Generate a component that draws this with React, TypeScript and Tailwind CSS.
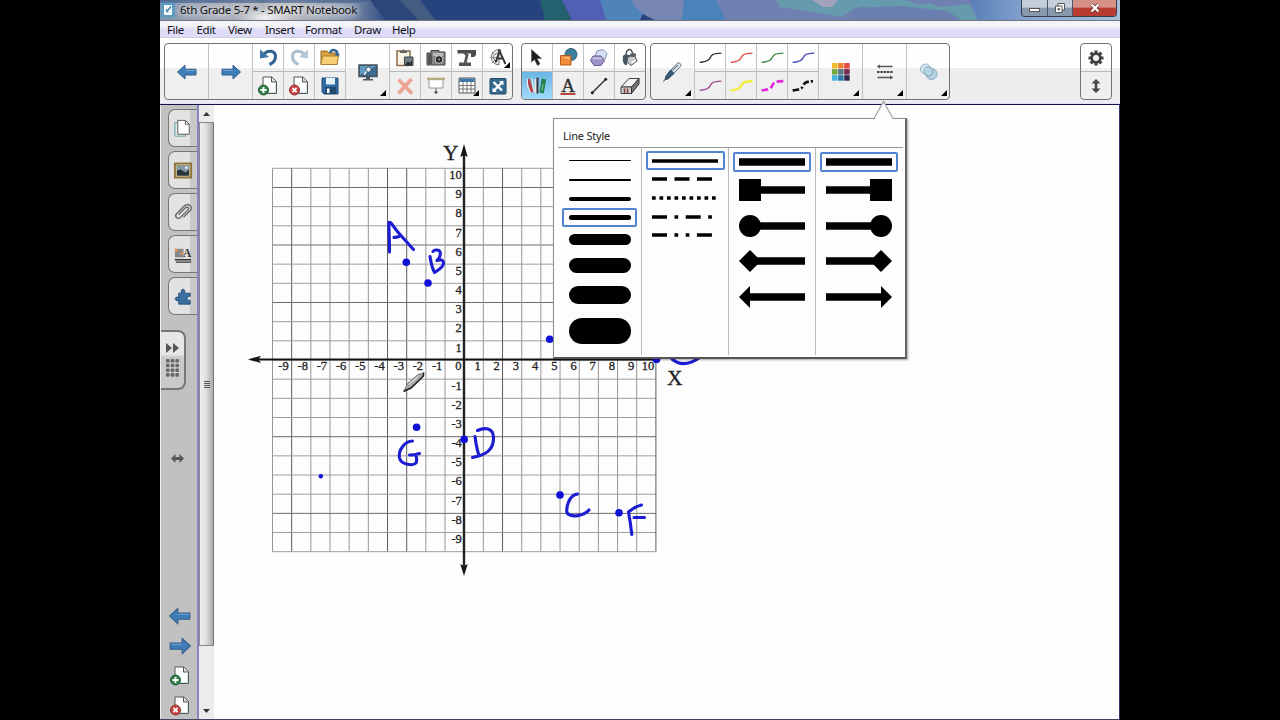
import type { ReactNode } from 'react';
import clsx from 'clsx';

const menus = [
  { label: 'File', width: 'w-[29.5px]' },
  { label: 'Edit', width: 'w-[31.5px]' },
  { label: 'View', width: 'w-[37px]' },
  { label: 'Insert', width: 'w-[40px]' },
  { label: 'Format', width: 'w-[49px]' },
  { label: 'Draw', width: 'w-[38px]' },
  { label: 'Help', width: 'w-[40px]' },
];

function Icon({ children, size = 22 }: { children: ReactNode; size?: number }) {
  return (
    <svg width={size} height={size} viewBox="0 0 22 22" fill="none" className="shrink-0">
      {children}
    </svg>
  );
}

/* ---------- icons ---------- */

function ArrowIcon({ right = false, size = 22 }: { right?: boolean; size?: number }) {
  return (
    <Icon size={size}>
      <path
        transform={right ? 'translate(22 0) scale(-1 1)' : undefined}
        d="M1.5 11 9 4.2V8.2H20V14H9V18Z"
        fill="#3f7db8"
        stroke="#345f8c"
        strokeWidth="1"
      />
      <path d={right ? 'M3 9.500H13' : 'M9 9.500H19'} stroke="#6ba2d2" />
    </Icon>
  );
}

function UndoIcon({ redo = false }: { redo?: boolean }) {
  return (
    <Icon>
      <g transform={redo ? 'translate(22 -1) scale(-1 1)' : 'translate(1 -1)'}>
        <path d="M6 8C10 3.500 17 4.500 17.500 10C17.700 14 15 17 11.500 18.500" stroke={redo ? '#a9bfd0' : '#2f628f'} strokeWidth="3" />
        <path d="M2 3.500V12.500L11 11Z" fill={redo ? '#b3c7d6' : '#3d76a6'} />
      </g>
    </Icon>
  );
}

function PageIcon({ remove = false }: { remove?: boolean }) {
  return (
    <Icon>
      <path d="M6 2H15L19.500 6.500V18.500H6Z" fill="#fdfefe" stroke="#555" />
      <path d="M8 17.500H18.500V9" stroke="#c8e6e6" />
      <path d="M14.500 2V7H19.500" fill="#ddd" stroke="#555" />
      <circle cx="6.500" cy="15" r="5" fill={remove ? '#c9403f' : '#31804a'} stroke={remove ? '#8e2f2f' : '#235d36'} />
      {remove ? (
        <path d="M4.400 12.900 8.600 17.100M8.600 12.900 4.400 17.100" stroke="#fff" strokeWidth="1.800" />
      ) : (
        <path d="M6.500 12V18M3.500 15H9.500" stroke="#fff" strokeWidth="1.800" />
      )}
    </Icon>
  );
}

const FolderIcon = () => (
  <Icon>
    <path d="M2 4H8L10 6H18V17.500H2Z" fill="#d8a33d" stroke="#8f6b28" />
    <path d="M11 6C12 2 18 1.500 18.500 7" stroke="#35699a" strokeWidth="2.500" />
    <path d="M15.500 7H21L18.500 11Z" fill="#35699a" />
    <path d="M2 17.500 3.500 9H19.500L18 17.500Z" fill="#f5cf72" stroke="#a57d33" />
  </Icon>
);

const SaveIcon = () => (
  <Icon>
    <path d="M3 3H19V19H5L3 17Z" fill="#2f6ca3" stroke="#244d78" />
    <path d="M7 3H16V9.500H7Z" fill="#e6f0f8" />
    <path d="M6 12H17V19H6Z" fill="#234a70" />
    <path d="M8 13.500H10.500V18H8Z" fill="#fff" />
  </Icon>
);

const MonitorIcon = () => (
  <Icon>
    <path d="M2 4H20V15.500H2Z" fill="#3c6c8d" stroke="#47525c" strokeWidth="1.500" />
    <path d="M3 5H19L3 14Z" fill="#5f9cc0" />
    <circle cx="11.500" cy="8.500" r="2.700" fill="#e5f1f7" stroke="#28465d" />
    <path d="M9.500 10.500 7 13.500" stroke="#fff" strokeWidth="1.500" />
    <path d="M9 16H13V18H16V19.500H6V18H9Z" fill="#4d5962" />
  </Icon>
);

const PasteIcon = () => (
  <Icon>
    <path d="M3 4H16V18.500H3Z" fill="#f8f1e5" stroke="#8b6a49" strokeWidth="1.500" />
    <path d="M6 6V3.500H8.500L9.500 2L10.500 3.500H13V6Z" fill="#666" />
    <path d="M10.500 10H19V18.500H10.500Z" fill="#6f7f88" stroke="#444" />
    <path d="M11 18 14 14 16 16 18 13V18Z" fill="#2b3338" />
  </Icon>
);

const CameraIcon = () => (
  <Icon>
    <path d="M2 6H6V3.500H14V5H20V18H2Z" fill="#858585" stroke="#444" />
    <path d="M3 7H7V17H3Z" fill="#555" />
    <path d="M8 6H18V9H8Z" fill="#bbb" />
    <circle cx="14" cy="12.500" r="3.800" fill="#222" stroke="#ccc" />
    <circle cx="14" cy="12.500" r="1.300" fill="#888" />
  </Icon>
);

const DocCameraIcon = () => (
  <Icon>
    <path d="M1.500 3H20V8L18 10H15V6.500H1.500Z" fill="#4b4b4b" />
    <path d="M8 5 11 8 9 17" stroke="#555" strokeWidth="2.800" />
    <path d="M3 15.500H15V19H3Z" fill="#555" />
  </Icon>
);

const CompassIcon = () => (
  <Icon>
    <path d="M12 2.500A7.700 7.700 0 1 0 12 17.900Z" fill="#e9edef" stroke="#777" />
    <path d="M11 6.500A3.800 3.800 0 1 0 11 14" fill="#fff" stroke="#777" />
    <path d="M3 10.500H10M5 5 8 8M5 16 8 13" stroke="#8c8c8c" />
    <path d="M8.500 15.500 12.500 4 18.500 17M10 11.500H16" stroke="#333" strokeWidth="1.900" />
    <circle cx="12.500" cy="4" r="1.700" fill="#444" />
  </Icon>
);

const DeleteIcon = () => (
  <Icon>
    <path d="M4.500 4.500 18 18.500M17.500 4 4.500 18.500" stroke="#eda596" strokeWidth="3.800" />
  </Icon>
);

const ShadeIcon = () => (
  <Icon>
    <path d="M2 4H20" stroke="#b3ab7e" strokeWidth="2.500" />
    <path d="M4 5.500V13H18V5.500" fill="#fff" stroke="#999" />
    <path d="M11 13V16" stroke="#777" />
    <circle cx="11" cy="17.300" r="1.500" fill="#555" />
  </Icon>
);

const TableIcon = () => (
  <Icon>
    <path d="M3 3H19V18H3Z" fill="#fff" stroke="#555" />
    <path d="M3.500 3.500H18.500V7H3.500Z" fill="#3f76a7" />
    <path d="M3 10.500H19M3 14H19M7 7V18M11 7V18M15 7V18" stroke="#777" />
  </Icon>
);

const ExchangeIcon = () => (
  <Icon>
    <rect x="3" y="3.500" width="16" height="15.500" rx="1" fill="#33688f" stroke="#234966" />
    <path d="M6.500 7 15 15.500M15 7.500 7 15.500" stroke="#fff" strokeWidth="2.400" />
    <path d="M12 6H16.500V10.500ZM5.500 12.500V17H10Z" fill="#fff" />
  </Icon>
);

const PointerIcon = () => (
  <Icon>
    <path d="M5.500 2.500V15L8.500 12.500 11.500 18.500 14 17 11 11.500H15.500Z" fill="#1c1c1c" stroke="#555" strokeWidth="0.600" />
  </Icon>
);

const ShapesIcon = () => (
  <Icon>
    <circle cx="14" cy="7.500" r="6" fill="#3d7f9e" stroke="#2e6079" />
    <path d="M3.500 8.500H14V18H3.500Z" fill="#f18b38" stroke="#b35b1f" />
    <path d="M5 10H12.500V12.500Z" fill="#fac183" />
  </Icon>
);

const PolygonIcon = () => (
  <Icon>
    <path d="M9 4 15 2.500 19 6.500 17 12 11 13.500 7 9.500Z" fill="#d6def4" stroke="#8290b5" />
    <path d="M5 9H13L16.500 13.500 13 18.500H6L2.500 13.500Z" fill="#9b91c5" stroke="#665b91" />
    <path d="M5 10H13L14.500 12.500H4Z" fill="#c4bddf" />
  </Icon>
);

const BucketIcon = () => (
  <Icon>
    <path d="M9 9 15 7 18 14 12 18.500 8 15Z" fill="#c5cacc" stroke="#555" />
    <path d="M7 9C7 1 13 0 14 8" stroke="#555" strokeWidth="1.500" />
    <path d="M4 9C6 6 10 8 13 9L8 11V18C5 19 3 14 4 9Z" fill="#435763" />
    <ellipse cx="14" cy="8" rx="3.200" ry="2" fill="#5c6469" />
    <path d="M12.500 16 16.500 13.500" stroke="#fff" strokeWidth="1.500" />
  </Icon>
);

const PensIcon = () => (
  <Icon>
    <path d="M2.500 4 6 17.500" stroke="#b63f45" strokeWidth="3" />
    <path d="M1.500 4V11L5 18M5.500 3 8 17" stroke="#eee" />
    <path d="M9.500 4V18" stroke="#e6e6e6" strokeWidth="2" />
    <path d="M11.500 2.500V18.500" stroke="#393939" strokeWidth="2" />
    <path d="M18 4 15.500 18" stroke="#21814f" strokeWidth="4.500" />
    <path d="M17 9 16 16" stroke="#84c49f" />
  </Icon>
);

const TextIcon = () => (
  <Icon>
    <text x="11" y="16.500" textAnchor="middle" fontSize="19" fontFamily="Liberation Serif, serif" fill="#333" stroke="#333" strokeWidth="0.400">
      A
    </text>
    <path d="M3.500 19H18.500" stroke="#b5473f" strokeWidth="2.200" />
  </Icon>
);

const LineIcon = () => (
  <Icon>
    <path d="M4 18 18 4" stroke="#333" strokeWidth="1.400" />
    <circle cx="4.300" cy="17.700" r="1.500" fill="#222" />
    <circle cx="17.700" cy="4.300" r="1.500" fill="#222" />
  </Icon>
);

const EraserIcon = () => (
  <Icon>
    <path d="M2 12 10 3.500H20L12.500 12Z" fill="#f2f2f2" stroke="#444" />
    <path d="M2 12H12.500V18.500H2Z" fill="#d0cbc8" stroke="#444" />
    <path d="M12.500 12 20 3.500V9L12.500 18.500Z" fill="#777" stroke="#333" />
    <path d="M5.500 13.500V18M8.500 13.500V18" stroke="#7a4038" strokeWidth="1.500" />
  </Icon>
);

const PenIcon = () => (
  <Icon>
    <path d="M9 9 15 2.500C17 .8 20 3 18.500 5.500L11 13Z" fill="#e1e8ee" stroke="#5d6b78" />
    <path d="M8.500 9 12 12.500 6 18 3 18.500 4 15Z" fill="#3b5d7d" stroke="#32485c" />
    <path d="M3 18.500 1.500 20.500" stroke="#333" />
    <path d="M10.500 9.500 16 4" stroke="#7b8e9e" strokeWidth="1.500" />
  </Icon>
);

const swatches = ['#f2b92c', '#f0822f', '#e34b43', '#76a944', '#58778b', '#7b2850', '#45b4df', '#3079ab', '#332750'];

const PaletteIcon = () => (
  <Icon>
    {swatches.map((c, i) => (
      <rect key={c} x={2 + (i % 3) * 6.1} y={2 + Math.floor(i / 3) * 6.1} width="5.500" height="5.500" fill={c} />
    ))}
  </Icon>
);

const LineStyleIcon = () => (
  <Icon>
    <path d="M3.500 5.500H18.500" stroke="#555" strokeWidth="1.700" />
    <path d="M3 5.500 6 3.500V7.500ZM19 16.500 16 14.500V18.500Z" fill="#555" />
    <path d="M3 11H19" stroke="#444" strokeWidth="2" strokeDasharray="2.500 .8" />
    <path d="M3.500 16.500H18.500" stroke="#555" strokeWidth="1.700" />
  </Icon>
);

const TransparencyIcon = () => (
  <Icon>
    <circle cx="7.500" cy="8" r="5" fill="#d1e5ee" stroke="#9ab5c4" />
    <circle cx="13.500" cy="13" r="5.500" fill="#a8cde0" fillOpacity=".8" stroke="#88aabd" />
    <circle cx="10.500" cy="10.500" r="4.500" fill="#bcdbe8" fillOpacity=".6" stroke="#819dad" />
  </Icon>
);

const GearIcon = () => (
  <Icon>
    {[0, 45, 90, 135].map((a) => (
      <path key={a} d="M11 3.500V18.500" stroke="#414141" strokeWidth="3.200" transform={`rotate(${a} 11 11)`} />
    ))}
    <circle cx="11" cy="11" r="5.600" fill="#414141" />
    <circle cx="11" cy="11" r="3" fill="#f7f7f7" />
  </Icon>
);

const UpDownIcon = () => (
  <Icon>
    <path d="M11 4 15.500 8.500H12.300V13.500H15.500L11 18 6.500 13.500H9.700V8.500H6.500Z" fill="#464646" />
  </Icon>
);

function Stroke({ color, dash, bold }: { color: string; dash?: string; bold?: boolean }) {
  return (
    <Icon size={24}>
      <path d="M1.500 15C5.500 14.500 9.500 14.500 11 11S13.500 7 21.500 6.500" stroke={color} strokeWidth={bold ? 2.4 : 1.3} strokeDasharray={dash} />
    </Icon>
  );
}

/* ---------- toolbar ---------- */

function Group({ className, children }: { className: string; children: ReactNode }) {
  return (
    <div
      className={clsx(
        'flex h-[57px] shrink-0 overflow-hidden rounded-[4px] border border-[#737373] bg-linear-to-b from-[#fefefe] from-44% to-[#efefef] to-44%',
        className,
      )}
    >
      {children}
    </div>
  );
}

const Corner = () => (
  <span className="absolute right-[3px] bottom-[3px] h-[6px] w-[6px] bg-black [clip-path:polygon(100%_0,100%_100%,0_100%)]" />
);

function Big({ children, corner }: { children: ReactNode; corner?: boolean }) {
  return (
    <div className="relative flex w-[44px] shrink-0 items-center justify-center border-r border-[#c2c2c2] first:w-[44px] last:w-[43px] last:border-r-0">
      {children}
      {corner && <Corner />}
    </div>
  );
}

function Pair({ top, bottom, corners = '', active }: { top: ReactNode; bottom: ReactNode; corners?: string; active?: boolean }) {
  return (
    <div className="flex w-[31px] shrink-0 flex-col border-r border-[#c2c2c2] last:w-[30px] last:border-r-0">
      <div className="relative flex h-[28px] items-center justify-center border-b border-[#b8b8b8]">
        {top}
        {corners.includes('t') && <Corner />}
      </div>
      <div className={clsx('relative flex flex-1 items-center justify-center', active && 'bg-linear-to-b from-[#68b5e4] to-[#a1d9fa]')}>
        {bottom}
        {corners.includes('b') && <Corner />}
      </div>
    </div>
  );
}

function Toolbar() {
  return (
    <div className="flex h-[66px] items-start border-b border-[#e0e0f4] bg-linear-to-b from-white from-46% to-[#eeeeef] to-46% pt-[5px] pr-[8px] pl-[4px]">
      <Group className="w-[349px]">
        <Big><ArrowIcon /></Big>
        <Big><ArrowIcon right /></Big>
        <Pair top={<UndoIcon />} bottom={<PageIcon />} />
        <Pair top={<UndoIcon redo />} bottom={<PageIcon remove />} />
        <Pair top={<FolderIcon />} bottom={<SaveIcon />} />
        <Big corner><MonitorIcon /></Big>
        <Pair top={<PasteIcon />} bottom={<DeleteIcon />} />
        <Pair top={<CameraIcon />} bottom={<ShadeIcon />} />
        <Pair top={<DocCameraIcon />} bottom={<TableIcon />} corners="b" />
        <Pair top={<CompassIcon />} bottom={<ExchangeIcon />} corners="t" />
      </Group>
      <Group className="ml-[8px] w-[125px]">
        <Pair top={<PointerIcon />} bottom={<PensIcon />} active />
        <Pair top={<ShapesIcon />} bottom={<TextIcon />} />
        <Pair top={<PolygonIcon />} bottom={<LineIcon />} />
        <Pair top={<BucketIcon />} bottom={<EraserIcon />} />
      </Group>
      <Group className="ml-[4px] w-[300px]">
        <Big corner><PenIcon /></Big>
        <Pair top={<Stroke color="#333" />} bottom={<Stroke color="#a04c90" />} />
        <Pair top={<Stroke color="#dd4f4c" />} bottom={<Stroke color="#f0ef4a" bold />} />
        <Pair top={<Stroke color="#448849" />} bottom={<Stroke color="#e324dc" bold dash="6 2.500" />} />
        <Pair top={<Stroke color="#4448bd" />} bottom={<Stroke color="#111" bold dash="6 2 2 2" />} />
        <Big corner><PaletteIcon /></Big>
        <Big corner><LineStyleIcon /></Big>
        <Big corner><TransparencyIcon /></Big>
      </Group>
      <Group className="ml-auto w-[32px]">
        <Pair top={<GearIcon />} bottom={<UpDownIcon />} />
      </Group>
    </div>
  );
}

/* ---------- window chrome ---------- */

function TitleBar() {
  return (
    <div className="relative flex h-[21px] items-center overflow-hidden border-b border-[#6f7888] bg-[#27437d]">
      <svg className="absolute inset-0" width="960" height="20" viewBox="160 0 960 20">
        <defs>
          <linearGradient id="glass" x1="0" x2="1">
            <stop offset="0" stopColor="#8393ab" />
            <stop offset=".18" stopColor="#a0a6b4" />
            <stop offset=".5" stopColor="#b8b9bd" />
            <stop offset=".7" stopColor="#8e9bb0" />
            <stop offset=".85" stopColor="#3c5688" />
            <stop offset="1" stopColor="#27437d" />
          </linearGradient>
          <radialGradient id="glow">
            <stop offset="0" stopColor="#fff" stopOpacity=".85" />
            <stop offset="1" stopColor="#fff" stopOpacity="0" />
          </radialGradient>
          <linearGradient id="sky" x1="0" x2="1">
            <stop offset="0" stopColor="#5a7fb8" />
            <stop offset=".4" stopColor="#86a5cf" />
            <stop offset="1" stopColor="#a9bed6" />
          </linearGradient>
        </defs>
        <path d="M160 0H420V20H160Z" fill="url(#glass)" />
        <path d="M160 0H375L355 3H160Z" fill="#405d8c" opacity=".7" />
        <ellipse cx="265" cy="18" rx="28" ry="10" fill="url(#glow)" />
        <path d="M370 0H400L425 20H385Z" fill="#2b4679" />
        <path d="M400 0H420L435 20H418Z" fill="#435c80" />
        <path d="M540 0H562L572 20H545Z" fill="#24616f" />
        <path d="M562 0H600L610 20H572Z" fill="#515fb5" />
        <path d="M600 0H650L640 20H606Z" fill="#4f84b8" />
        <path d="M632 0H690L682 20H655Q635 12 632 0Z" fill="#7886b4" />
        <path d="M684 0H720L728 20H682Z" fill="#4a83b9" />
        <path d="M716 0H985L990 20H726Z" fill="#7180b2" />
        <path d="M776 0H905L920 5 930 3 940 7 970 4 978 20H850L865 6 852 10 842 17 800 10 780 7Z" fill="#659bad" />
        <path d="M812 0H838L832 7H823Z" fill="#a3a2bd" />
        <path d="M855 8 900 6 948 11 960 20H848Z" fill="#6b7eb0" />
        <path d="M970 0H1120V20H978Z" fill="url(#sky)" />
      </svg>
      <svg className="relative ml-px" width="15" height="16" viewBox="0 0 15 16">
        <rect width="14" height="15" y=".5" rx="1" fill="#5c9cc3" />
        <path d="M3 3H11V13H3Z" fill="#f3f9fb" />
        <path d="M5.500 10 10 4.500M5 7 7 10" stroke="#35799b" strokeWidth="1.200" fill="none" />
      </svg>
      <span className="relative ml-[4px] text-[11.5px] tracking-[-0.3px] whitespace-nowrap text-[#111] [text-shadow:0_0_6px_#fff,0_0_8px_#fff]">
        6th Grade 5-7 * - SMART Notebook
      </span>
      <div className="relative mr-[3px] ml-auto flex h-[17px] self-start overflow-hidden rounded-b-[4px] border border-t-0 border-[#353d4b]">
        <div className="flex w-[26px] items-center justify-center border-r border-[#4c5669] bg-linear-to-b from-[#c5cfdb] from-45% to-[#8899ae] to-50%">
          <span className="mt-[3px] h-[4px] w-[11px] border border-[#555] bg-white" />
        </div>
        <div className="flex w-[25px] items-center justify-center border-r border-[#4c5669] bg-linear-to-b from-[#c5cfdb] from-45% to-[#8899ae] to-50%">
          <svg width="12" height="12" viewBox="0 0 12 12" fill="none">
            <path d="M4 1.500H10.500V8H4Z" fill="#fff" stroke="#555" />
            <path d="M1.500 4H8V10.500H1.500Z" fill="#fff" stroke="#555" />
            <path d="M4 6.500H5.500V8H4Z" stroke="#555" />
          </svg>
        </div>
        <div className="flex w-[43px] items-center justify-center bg-linear-to-b from-[#d59087] from-45% to-[#b93c31] to-50%">
          <svg width="12" height="10" viewBox="0 0 12 10">
            <path d="M2.500 1.500 9.500 8.500M9.500 1.500 2.500 8.500" stroke="#633" strokeWidth="3.600" />
            <path d="M2.500 1.500 9.500 8.500M9.500 1.500 2.500 8.500" stroke="#fff" strokeWidth="2.200" />
          </svg>
        </div>
      </div>
    </div>
  );
}

const tabIcons = [
  <Icon key="pages" size={21}>
    <path d="M2 5H13V19H2Z" fill="#e4f1f1" stroke="#5c9a9a" />
    <path d="M5 2.500H13L17 6.500V17H5Z" fill="#fff" stroke="#555" />
    <path d="M13 2.500V6.500H17" stroke="#555" />
  </Icon>,
  <Icon key="gallery" size={21}>
    <path d="M2 3.500H19V18.500H2Z" fill="#27343c" stroke="#96753b" strokeWidth="2" />
    <path d="M4 5.500H17V10L13 13 8 10 4 11Z" fill="#84999f" />
    <circle cx="14" cy="8" r="1.500" fill="#eef" />
    <path d="M3.500 5V17H17.500V5Z" stroke="#e5d7a4" />
  </Icon>,
  <Icon key="clip" size={21}>
    <path d="M6 13 13 6C15 4 17.500 6.500 15.500 8.500L8 16C4.500 19 1 15 4 12L12 4C16 .5 21.500 5 18 9L11 16" stroke="#666" strokeWidth="1.400" />
  </Icon>,
  <Icon key="props" size={21}>
    <path d="M2 5H11V14H2Z" fill="#888" />
    <path d="M2 5H5V8H2ZM8 8H11V11H8Z" fill="#d6955f" />
    <text x="10.500" y="14" fontSize="12" fontWeight="bold" fontFamily="Liberation Serif, serif" fill="#333">A</text>
    <path d="M2 16.500H19M3 19H19" stroke="#333" strokeWidth="1.500" />
  </Icon>,
  <Icon key="addons" size={21}>
    <path d="M6 7.500H9C7 2 14 2 12 7.500H18V11C14 10 14 16 18 15V19H6V15C1 17 1 10 6 12Z" fill="#3c6f9e" stroke="#2b527a" />
  </Icon>,
];

function Sidebar() {
  return (
    <div className="flex w-[37px] shrink-0 flex-col border-l border-[#ededed] bg-[#c1c1c1]">
      <div className="flex flex-col gap-[4px] pt-[4px] pl-[7px]">
        {tabIcons.map((icon) => (
          <div key={icon.key} className="flex h-[38px] items-center rounded-l-[7px] border border-r-0 border-[#777] bg-linear-to-r from-[#e2e2e2] from-75% to-[#c9c9c9] to-75% pl-[4px]">
            {icon}
          </div>
        ))}
      </div>
      <div className="mt-[15px] flex h-[60px] w-[25px] flex-col items-center rounded-r-[8px] border-2 border-l-0 border-[#777] bg-linear-to-b from-[#e6e6e6] from-40% to-[#c9c9c9] to-45% pt-[10px]">
        <svg width="16" height="40" viewBox="0 0 16 40">
          <path d="M1 1 7 6 1 11ZM8 1 14 6 8 11Z" fill="#555" />
          {[0, 1, 2, 3].flatMap((r) =>
            [0, 1, 2].map((c) => <rect key={`${r}${c}`} x={1 + c * 4.7} y={17 + r * 4.7} width="3.600" height="3.600" rx="1.200" fill="#666" />),
          )}
        </svg>
      </div>
      <svg className="mt-[61px] ml-[9px]" width="15" height="15" viewBox="0 0 15 15">
        <path d="M1 7.500 5.500 3V6H9.500V3L14 7.500 9.500 12V9H5.500V12Z" fill="#585858" />
      </svg>
      <div className="mt-auto mb-[2px] flex flex-col items-center gap-[8px] pl-px">
        <ArrowIcon size={24} />
        <div className="-mt-[2px]"><ArrowIcon right size={24} /></div>
        <div className="-mt-px"><PageIcon /></div>
        <PageIcon remove />
      </div>
    </div>
  );
}

function ScrollBar() {
  return (
    <div className="flex w-[17px] shrink-0 flex-col items-center border-l-2 border-[#8885bd] bg-[#ececec]">
      <span className="mt-[7px] h-[4px] w-[7px] bg-[#333] [clip-path:polygon(50%_0,100%_100%,0_100%)]" />
      <div className="mt-[6px] flex h-[524px] w-full items-center justify-center rounded-[1px] border border-[#8a8a8a] border-r-[#777] bg-linear-to-r from-[#efefef] via-[#e2e2e2] via-45% to-[#aaaaaa]">
        <span className="flex flex-col gap-px">
          <span className="h-px w-[6px] bg-[#555]" />
          <span className="h-px w-[6px] bg-[#555]" />
          <span className="h-px w-[6px] bg-[#555]" />
          <span className="h-px w-[6px] bg-[#555]" />
        </span>
      </div>
      <span className="mt-auto mb-[6px] h-[4px] w-[7px] bg-[#333] [clip-path:polygon(0_0,100%_0,50%_100%)]" />
    </div>
  );
}

/* ---------- worksheet ---------- */

const X0 = 272.5;
const Y0 = 168.3;
const STEP = 19.17;
const darkCols = [1, 6, 7, 12, 20];
const darkRows = [1, 4, 7, 14, 18];

const points = [
  [406.3, 262.3],
  [428, 283],
  [549.7, 339.2],
  [416.6, 427.3],
  [464.2, 439.4],
  [560, 495],
  [619, 512.7],
  [656.5, 359.5],
];

const ink = [
  'M389.500 252C389.500 241 389 230 388.800 222.500C391 221 393 227 400 234.500L413.500 249.500M394 237.500C396 236.500 398.500 238 400.500 235.500',
  'M430 256.500C431 263 432 268 434.500 272.500C438 270 444 267 443.500 262.500C443 259 439 260 437 260.500C441 257 441 252 439 250.500C437 249.500 434 250 433 251.500',
  'M412.500 441C405 441 398 450 399.500 458C401 465 413 466 416 463C417.500 460 416 455 415.500 454.500C413 455 411 455 409.500 455M415.500 454.500L419.500 453.500',
  'M475 436.500C476 444 477 450 479 455.500M477.500 430.500C485 427 493 428 493.500 437C494 450 486 455 472.500 457.500',
  'M577.500 494C569 495 566 507 567 513C571 518 584 516 589 510',
  'M641.500 505C637 506 632 509 628.500 512C630 520 631 527 631.800 534.500M634 517.500H644.500',
  'M672 359C680 366 690 364 699 358',
];

function Worksheet() {
  return (
    <svg width="905" height="614" viewBox="214 105 905 614" fill="none" className="block">
      {Array.from({ length: 21 }, (_, i) => (
        <g key={i}>
          <path d={`M${X0 + i * STEP} ${Y0}V${Y0 + 20 * STEP}`} stroke={darkCols.includes(i) ? '#5c5c5c' : '#979797'} />
          <path d={`M${X0} ${Y0 + i * STEP}H${X0 + 20 * STEP}`} stroke={darkRows.includes(i) ? '#6c6c6c' : '#9d9d9d'} />
        </g>
      ))}
      <path d="M464 152V568" stroke="#222" strokeWidth="2.400" />
      <path d="M256 359.400H660" stroke="#111" strokeWidth="2" />
      <path d="M464 144 460.300 157 464 155 467.700 157ZM464 576 460.300 564 464 566 467.700 564ZM248 359.400 261 355.700 258.500 359.400 261 363.100Z" fill="#151515" />

      <g fontFamily="Liberation Serif, serif" fill="#222" stroke="#222" strokeWidth=".3" fontSize="12.5">
        {Array.from({ length: 20 }, (_, i) => i - 9).map((n) => (
          <text key={n} x={n < 0 ? 456.3 + n * 19.2 : n === 10 ? 648 : 458.3 + n * 19.2} y="370.300" textAnchor="middle">
            {n}
          </text>
        ))}
        {[10, 9, 8, 7, 6, 5, 4, 3, 2, 1, -1, -2, -3, -4, -5, -6, -7, -8, -9].map((n) => (
          <text key={n} x="461.800" y={(n < 0 ? 370.4 : 370.8) - n * 19.18} textAnchor="end">
            {n}
          </text>
        ))}
        <text x="443" y="159.500" fontSize="21.500">Y</text>
        <text x="667" y="384.500" fontSize="21.500">X</text>
      </g>

      {points.map(([x, y]) => (
        <circle key={x} cx={x} cy={y} r="3.800" fill="#1010d6" />
      ))}
      <circle cx="320.800" cy="476.200" r="2.200" fill="#1010d6" />
      {ink.map((d) => (
        <path key={d} d={d} stroke="#1c1cd2" strokeWidth="3.100" strokeLinecap="round" strokeLinejoin="round" />
      ))}

      {/* pen cursor */}
      <path d="M404 390.500 408 383 418 374.500 424 373 421 379 411 388Z" fill="#a7acb0" stroke="#666" strokeWidth=".8" />
      <path d="M403.500 391.500 411 388 423.500 376V372.500" stroke="#222" strokeWidth="1.500" />
      <path d="M409 384.500 418 376.500" stroke="#eee" />
    </svg>
  );
}

/* ---------- line style popup ---------- */

const weights = [
  { row: 'h-[19px]', bar: 'h-px' },
  { row: 'h-[19px]', bar: 'h-[2px]' },
  { row: 'h-[19px]', bar: 'h-[4px]' },
  { row: 'h-[19px]', bar: 'h-[5px]', selected: true },
  { row: 'h-[24px]', bar: 'h-[11px]' },
  { row: 'h-[28px]', bar: 'h-[15px]' },
  { row: 'h-[32px]', bar: 'h-[18px]' },
  { row: 'h-[40px]', bar: 'h-[26px]' },
];

const dashes = [undefined, '15 7.500', '3.700 3.800', '15 7.500 3.700 7.500', '15 7.500 3.700 7.500 3.700 7.500'];

const caps = [
  null,
  <path key="square" d="M0 0H22V22H0Z" />,
  <circle key="circle" cx="11" cy="11" r="11" />,
  <path key="diamond" d="M0 11 11 0 22 11 11 22Z" />,
  <path key="arrow" d="M0 11 11 0V22Z" />,
];

function CapColumn({ flip }: { flip?: boolean }) {
  return (
    <div className={clsx('flex shrink-0 flex-col items-center pt-[4px]', flip ? 'w-[86px]' : 'w-[87px] border-r border-[#b9b9b9]')}>
      {caps.map((cap, i) => (
        <div
          key={i}
          className={clsx('flex items-center justify-center', i === 0 ? 'h-[20px] w-[78px] rounded-[2px] border-2 border-[#5283cf]' : 'h-[35.7px]')}
        >
          <svg width="66" height={i === 0 ? 8 : 22} viewBox={i === 0 ? '0 7 66 8' : '0 0 66 22'} className={clsx(flip && '-scale-x-100')}>
            <path d={cap ? 'M10 7.200H66V14.800H10Z' : 'M0 7.200H66V14.800H0Z'} />
            {cap}
          </svg>
        </div>
      ))}
    </div>
  );
}

function LineStylePopup() {
  return (
    <div className="absolute top-[118px] left-[393px] h-[241px] w-[354px] border border-[#8e8e8e] border-r-2 border-r-[#666] border-b-2 border-b-[#555] bg-[#fdfdfd] shadow-[1px_1px_2px_rgba(0,0,0,0.35)]">
      <svg className="absolute -top-[19px] right-[10px]" width="22" height="20" viewBox="0 0 22 20">
        <path d="M1.500 19.500 10.500 1.500 20.500 19.500V20H1.500Z" fill="#fdfdfd" />
        <path d="M1 18.500 10.500 1.500 20 18.500" fill="none" stroke="#a2a2a2" strokeWidth="1.200" />
      </svg>
      <div className="h-[28px] pt-[9px] pl-[9px] text-[11px] leading-[15px] tracking-[-0.2px] text-[#222]">Line Style</div>
      <div className="mr-[2px] ml-[4px] flex h-[208px] border-t border-[#999]">
        <div className="flex w-[84px] shrink-0 flex-col items-center border-r border-[#b9b9b9] pt-[3px]">
          {weights.map((w) => (
            <div key={w.bar} className={clsx('flex w-[75px] shrink-0 items-center justify-center', w.row, w.selected && 'rounded-[2px] border-2 border-[#5283cf]')}>
              <span className={clsx('w-[62px] shrink-0 rounded-full bg-black', w.bar)} />
            </div>
          ))}
        </div>
        <div className="flex w-[87px] shrink-0 flex-col items-center border-r border-[#b9b9b9] pt-[3px]">
          {dashes.map((dash, i) => (
            <div key={i} className={clsx('flex w-[79px] items-center justify-center', i === 0 ? 'h-[19px] rounded-[2px] border-2 border-[#5283cf]' : 'h-[18.7px]')}>
              <svg width="66" height="4" viewBox="0 0 66 4">
                <path d="M0 2H66" stroke="#000" strokeWidth="3.600" strokeDasharray={dash} />
              </svg>
            </div>
          ))}
        </div>
        <CapColumn />
        <CapColumn flip />
      </div>
    </div>
  );
}

export default function App() {
  return (
    <div className="flex h-[720px] w-[1280px] justify-center overflow-hidden bg-black font-['Noto_Sans','Open_Sans',sans-serif]">
      <div className="relative flex w-[960px] flex-col overflow-hidden bg-white">
        <TitleBar />
        <div className="flex h-[17px] items-center border-b border-[#d0d0da] bg-linear-to-b from-[#f4f4f8] from-30% to-[#dedcf8] to-55% pl-[7px]">
          {menus.map((m) => (
            <span key={m.label} className={clsx('pt-px text-[11.5px] leading-none tracking-[-0.4px] text-[#111]', m.width)}>
              {m.label}
            </span>
          ))}
        </div>
        <Toolbar />
        <div className="flex h-[615px] shrink-0 border-t border-r border-t-[#11144a] border-r-[#33366b]">
          <Sidebar />
          <ScrollBar />
          <div className="min-w-0 flex-1 bg-[#fdfdfd]">
            <Worksheet />
          </div>
        </div>
        <div className="h-px shrink-0 bg-[#42435c]" />
        <LineStylePopup />
      </div>
    </div>
  );
}
